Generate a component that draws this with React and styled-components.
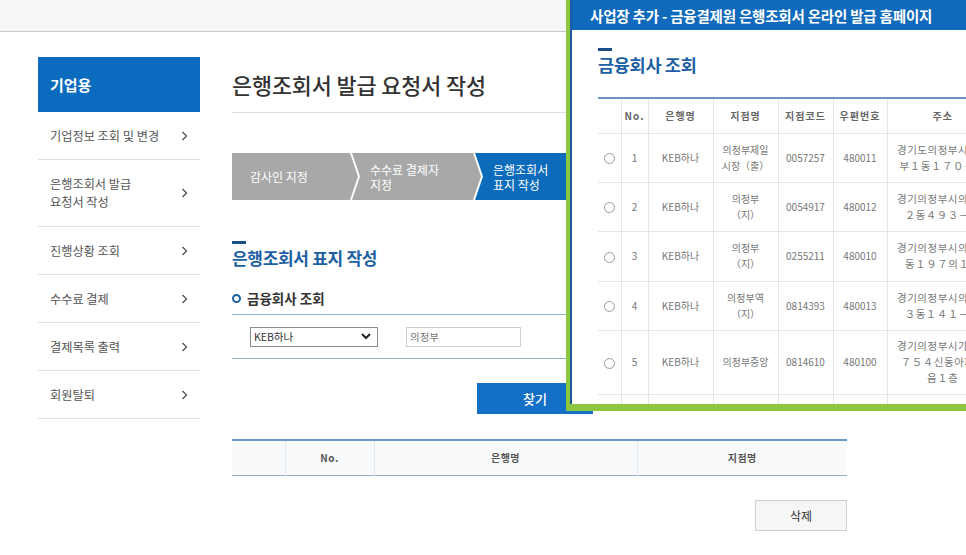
import React from 'react';
import styled, { createGlobalStyle } from 'styled-components';

const GlobalStyle = createGlobalStyle`
  html, body { margin: 0; padding: 0; overflow: hidden; background: #fff; }
  body { font-family: "Noto Sans CJK KR", "Noto Sans", sans-serif; }
  * { box-sizing: border-box; }
`;

const FONT = `"Noto Sans CJK KR", "Noto Sans", sans-serif`;
const BLUE = '#0d6bbb';
const HEAD_BLUE = '#1d5fa3';

const Page = styled.div`
  position: relative;
  width: 966px;
  height: 555px;
  overflow: hidden;
  font-family: ${FONT};
`;

const TopBar = styled.div`
  height: 32px;
  background: #f6f6f6;
  border-bottom: 1px solid #c8c8c8;
`;

const Body = styled.div`
  display: flex;
  padding: 25px 0 0 38px;
`;

const Sidebar = styled.nav`
  width: 162px;
  flex-shrink: 0;
`;

const SideHeader = styled.div`
  height: 55px;
  background: #0b6cbf;
  color: #fff;
  font-weight: 700;
  font-size: 15px;
  display: flex;
  align-items: center;
  padding-left: 12px;
`;

const SideItem = styled.div`
  height: ${p => p.$h}px;
  display: flex;
  align-items: center;
  justify-content: space-between;
  padding: 0 12px 0 12px;
  border-bottom: 1px solid #e0e0e0;
  font-size: 12.2px;
  line-height: 18px;
  color: #555;
`;

const Chevron = () => (
  <svg width="7" height="10" viewBox="0 0 7 10">
    <polyline points="1.5,1 5.5,5 1.5,9" fill="none" stroke="#555" strokeWidth="1.4" />
  </svg>
);

const Main = styled.main`
  margin-left: 32px;
  width: 615px;
  display: flex;
  flex-direction: column;
`;

const PageTitle = styled.h1`
  margin: 0;
  height: 56px;
  display: flex;
  align-items: center;
  border-bottom: 1px solid #dcdcdc;
  font-size: 21.8px;
  font-weight: 500;
  color: #333;
  letter-spacing: -0.1px;
`;

const Steps = styled.div`
  display: flex;
  margin-top: 40px;
  height: 47px;
`;

const Step = styled.div`
  width: ${p => p.$w}px;
  margin-left: ${p => (p.$first ? 0 : -6)}px;
  height: 100%;
  background: ${p => (p.$active ? BLUE : '#a8a8a8')};
  color: #fff;
  font-size: 12px;
  line-height: 15px;
  display: flex;
  align-items: center;
  padding-left: 18px;
  clip-path: ${p =>
    p.$first
      ? 'polygon(0 0, calc(100% - 8px) 0, 100% 50%, calc(100% - 8px) 100%, 0 100%)'
      : 'polygon(0 0, calc(100% - 8px) 0, 100% 50%, calc(100% - 8px) 100%, 0 100%, 8px 50%)'};
`;

const SectionTitle = styled.h2`
  margin: 41px 0 0;
  font-size: ${p => p.$size || 17}px;
  line-height: 20px;
  font-weight: 700;
  color: ${HEAD_BLUE};
  letter-spacing: -0.3px;
  &::before {
    content: '';
    display: block;
    width: 14px;
    height: 3px;
    background: #1c4f8a;
    margin-bottom: 4px;
  }
`;

const SubTitle = styled.h3`
  margin: 21px 0 0;
  display: flex;
  align-items: center;
  gap: 6px;
  font-size: 13.5px;
  line-height: 18px;
  font-weight: 700;
  color: #333;
`;

const Ring = styled.span`
  width: 9px;
  height: 9px;
  border-radius: 50%;
  border: 2.5px solid ${HEAD_BLUE};
`;

const SearchRow = styled.div`
  margin-top: 7px;
  height: 45px;
  border-top: 1px solid #8fb0cf;
  border-bottom: 1px solid #8fb0cf;
  display: flex;
  align-items: center;
  padding-left: 18px;
  gap: 28px;
`;

const SelectBox = styled.div`
  width: 128px;
  height: 20px;
  border: 1px solid #8d8d8d;
  display: flex;
  align-items: center;
  justify-content: space-between;
  padding: 0 6px 0 3px;
  font-size: 10.5px;
  color: #333;
`;

const InputBox = styled.div`
  width: 115px;
  height: 20px;
  border: 1px solid #cfcfcf;
  display: flex;
  align-items: center;
  padding-left: 3px;
  font-size: 10.5px;
  color: #777;
`;

const ButtonRow = styled.div`
  margin-top: 24px;
  display: flex;
`;

const PrimaryButton = styled.button`
  margin-left: 245px;
  width: 116px;
  height: 31px;
  border: 0;
  background: #1470c6;
  color: #fff;
  font-family: ${FONT};
  font-size: 13px;
  font-weight: 500;
`;

const ListTable = styled.table`
  margin-top: 25px;
  width: 615px;
  border-collapse: collapse;
  table-layout: fixed;
  border-top: 2px solid #6b98c6;
  border-bottom: 1px solid #8cafd0;
  th {
    height: 35px;
    background: #f8fafc;
    font-size: 10px;
    font-weight: 700;
    color: #555;
    border-left: 1px solid #e3e9ef;
    letter-spacing: 0.5px;
  }
  th:first-child { border-left: 0; }
`;

const DeleteRow = styled.div`
  margin-top: 24px;
  display: flex;
  justify-content: flex-end;
`;

const GrayButton = styled.button`
  width: 92px;
  height: 31px;
  background: #f6f6f6;
  border: 1px solid #cfcfcf;
  color: #333;
  font-family: ${FONT};
  font-size: 12px;
`;

/* Popup window */
const Popup = styled.div`
  position: absolute;
  left: 566px;
  top: 0;
  width: 440px;
  height: 411px;
  border-left: 4px solid #8dc63f;
  border-bottom: 7px solid #8dc63f;
  background: #fff;
`;

const PopupInner = styled.div`
  height: 100%;
  border-left: 2px solid #1a5c9e;
  overflow: hidden;
`;

const PopupHeader = styled.div`
  height: 30px;
  background: #0f6abb;
  color: #fff;
  font-size: 14.5px;
  font-weight: 700;
  display: flex;
  align-items: center;
  padding-left: 18px;
  white-space: nowrap;
  letter-spacing: -0.2px;
`;

const PopupBody = styled.div`
  padding: 18px 0 0 26px;
  h2 { margin-top: 0; }
`;

const ResultTable = styled.table`
  margin-top: 22px;
  width: 400px;
  border-collapse: collapse;
  table-layout: fixed;
  border-top: 2px solid #6e95bd;
  th, td {
    border-left: 1px solid #e6e6e6;
    border-bottom: 1px solid #e6e6e6;
    text-align: center;
    vertical-align: middle;
    padding: 0;
  }
  th:first-child, td:first-child { border-left: 0; }
  th {
    height: 35px;
    font-size: 10px;
    font-weight: 700;
    color: #666;
    letter-spacing: 1px;
  }
  td {
    font-size: 10px;
    line-height: 16px;
    color: #777;
  }
`;

const Row = styled.tr`
  height: ${p => p.$h}px;
`;

const Radio = styled.span`
  display: inline-block;
  width: 11px;
  height: 11px;
  border-radius: 50%;
  border: 1px solid #999;
  vertical-align: middle;
`;

const Addr = styled.td`
  && {
    font-size: 10.5px;
    letter-spacing: 0.5px;
    white-space: nowrap;
  }
`;

const menu = [
  { label: '기업정보 조회 및 변경', h: 48 },
  { label: <>은행조회서 발급<br />요청서 작성</>, h: 67 },
  { label: '진행상황 조회', h: 48 },
  { label: '수수료 결제', h: 48 },
  { label: '결제목록 출력', h: 48 },
  { label: '회원탈퇴', h: 48 },
];

const rows = [
  { n: 1, branch: ['의정부제일', '시장（출）'], code: '0057257', zip: '480011', addr: ['경기도의정부시의정', '부１동１７０－１'], h: 49 },
  { n: 2, branch: ['의정부', '（지）'], code: '0054917', zip: '480012', addr: ['경기의정부시의정부', '２동４９３－１'], h: 49 },
  { n: 3, branch: ['의정부', '（지）'], code: '0255211', zip: '480010', addr: ['경기의정부시의정부', '동１９７의１３'], h: 50 },
  { n: 4, branch: ['의정부역', '（지）'], code: '0814393', zip: '480013', addr: ['경기의정부시의정부', '３동１４１－３'], h: 49 },
  { n: 5, branch: ['의정부중앙'], code: '0814610', zip: '480100', addr: ['경기의정부시가능동', '７５４신동아파라', '음１층'], h: 64 },
  { n: 6, branch: ['의정부역'], code: '0814601', zip: '480101', addr: ['경기의정부시의정부'], h: 49 },
];

const Lines = ({ items }) => items.map((t, i) => (
  <React.Fragment key={i}>{i > 0 && <br />}{t}</React.Fragment>
));

export default function App() {
  return (
    <Page>
      <GlobalStyle />
      <TopBar />
      <Body>
        <Sidebar>
          <SideHeader>기업용</SideHeader>
          {menu.map((m, i) => (
            <SideItem key={i} $h={m.h}>
              <span>{m.label}</span>
              <Chevron />
            </SideItem>
          ))}
        </Sidebar>
        <Main>
          <PageTitle>은행조회서 발급 요청서 작성</PageTitle>
          <Steps>
            <Step $first $w={126}>감사인 지정</Step>
            <Step $w={129}>수수료 결제자<br />지정</Step>
            <Step $active $w={130}>은행조회서<br />표지 작성</Step>
          </Steps>
          <SectionTitle>은행조회서 표지 작성</SectionTitle>
          <SubTitle><Ring />금융회사 조회</SubTitle>
          <SearchRow>
            <SelectBox>
              <span>KEB하나</span>
              <svg width="10" height="7" viewBox="0 0 10 7">
                <polyline points="1,1 5,5 9,1" fill="none" stroke="#222" strokeWidth="2" />
              </svg>
            </SelectBox>
            <InputBox>의정부</InputBox>
          </SearchRow>
          <ButtonRow>
            <PrimaryButton>찾기</PrimaryButton>
          </ButtonRow>
          <ListTable>
            <colgroup>
              <col style={{ width: 53 }} />
              <col style={{ width: 89 }} />
              <col style={{ width: 263 }} />
              <col style={{ width: 210 }} />
            </colgroup>
            <thead>
              <tr>
                <th></th>
                <th>No.</th>
                <th>은행명</th>
                <th>지점명</th>
              </tr>
            </thead>
          </ListTable>
          <DeleteRow>
            <GrayButton>삭제</GrayButton>
          </DeleteRow>
        </Main>
      </Body>

      <Popup>
        <PopupInner>
          <PopupHeader>사업장 추가 - 금융결제원 은행조회서 온라인 발급 홈페이지</PopupHeader>
          <PopupBody>
            <SectionTitle $size={17.5}>금융회사 조회</SectionTitle>
            <ResultTable>
              <colgroup>
                <col style={{ width: 23 }} />
                <col style={{ width: 27 }} />
                <col style={{ width: 65 }} />
                <col style={{ width: 65 }} />
                <col style={{ width: 55 }} />
                <col style={{ width: 54 }} />
                <col style={{ width: 111 }} />
              </colgroup>
              <thead>
                <tr>
                  <th></th>
                  <th>No.</th>
                  <th>은행명</th>
                  <th>지점명</th>
                  <th>지점코드</th>
                  <th>우편번호</th>
                  <th>주소</th>
                </tr>
              </thead>
              <tbody>
                {rows.map(r => (
                  <Row key={r.n} $h={r.h}>
                    <td><Radio /></td>
                    <td>{r.n}</td>
                    <td>KEB하나</td>
                    <td><Lines items={r.branch} /></td>
                    <td>{r.code}</td>
                    <td>{r.zip}</td>
                    <Addr><Lines items={r.addr} /></Addr>
                  </Row>
                ))}
              </tbody>
            </ResultTable>
          </PopupBody>
        </PopupInner>
      </Popup>
    </Page>
  );
}
